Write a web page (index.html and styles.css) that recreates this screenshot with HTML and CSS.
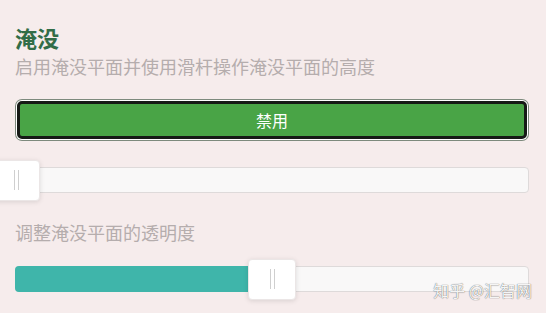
FILE: index.html
```html
<!DOCTYPE html>
<html lang="zh-CN">
<head>
<meta charset="utf-8">
<link rel="stylesheet" href="styles.css">
</head>
<body>
<div class="panel">
  <div class="title">淹没</div>
  <div class="desc">启用淹没平面并使用滑杆操作淹没平面的高度</div>
  <button class="btn">禁用</button>
  <div class="slider slider-first">
    <div class="track">
      <div class="fill" style="width:0%"></div>
      <div class="thumb" style="left:0%"><span class="grip"></span></div>
    </div>
  </div>
  <div class="label">调整淹没平面的透明度</div>
  <div class="slider slider-second">
    <div class="track">
      <div class="fill" style="width:50%"></div>
      <div class="thumb" style="left:50%"><span class="grip"></span></div>
    </div>
  </div>
</div>
<div class="watermark">知乎 @汇智网</div>
</body>
</html>
```
FILE: styles.css
```css
html, body {
  margin: 0;
  padding: 0;
}
body {
  width: 546px;
  height: 313px;
  overflow: hidden;
  background: #f6ecec;
  font-family: "Noto Sans CJK SC", "Noto Sans", sans-serif;
  position: relative;
}
.panel {
  display: flex;
  flex-direction: column;
  padding: 24px 17px 0 15px;
}
.title {
  font-size: 22px;
  line-height: 26px;
  font-weight: bold;
  color: #326d47;
}
.desc {
  margin-top: 4px;
  font-size: 18px;
  line-height: 24px;
  color: #b5adad;
}
.btn {
  margin: 23px 2px 0 2px;
  height: 38px;
  border: 3px solid #161a16;
  border-radius: 5px;
  background: #49a446;
  color: #ffffff;
  font-family: "Noto Sans CJK SC", "Noto Sans", sans-serif;
  font-size: 16px;
  padding: 0;
  box-shadow: 0 0 0 1px #ffffff, 0 0 0 2px #7d8a7d;
}
.slider {
  height: 41px;
  display: flex;
  align-items: center;
}
.slider-first {
  margin-top: 20px;
}
.slider-second {
  margin-top: 14px;
}
.label {
  margin-top: 20px;
  font-size: 18px;
  line-height: 24px;
  color: #b5adad;
}
.track {
  position: relative;
  flex: 1;
  height: 26px;
  box-sizing: border-box;
  background: #f9f8f8;
  border: 1px solid #dedada;
  border-radius: 4px;
}
.fill {
  height: 100%;
  background: #3fb5aa;
  border-radius: 4px 0 0 4px;
  margin: -1px 0 0 -1px;
  padding-bottom: 2px;
}
.thumb {
  position: absolute;
  top: -8px;
  width: 48px;
  height: 41px;
  margin-left: -24px;
  box-sizing: border-box;
  background: #ffffff;
  border: 1px solid #ebe6e6;
  border-radius: 4px;
  box-shadow: 0 1px 5px rgba(0, 0, 0, 0.12);
  display: flex;
  align-items: center;
  justify-content: center;
}
.grip {
  width: 3px;
  height: 20px;
  border-left: 1px solid #cfcfcf;
  border-right: 1px solid #cfcfcf;
}
.watermark {
  position: absolute;
  top: 280px;
  right: 14px;
  font-size: 16px;
  line-height: 20px;
  color: rgba(255, 255, 255, 0.95);
  text-shadow: 0 0 1px rgba(0, 0, 0, 0.55), 0 0 1px rgba(0, 0, 0, 0.3);
}
```
